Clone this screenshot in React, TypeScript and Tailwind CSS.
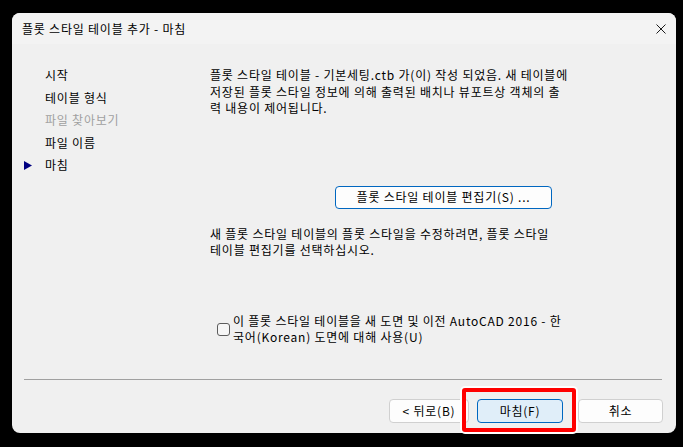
import React from "react";

const navItems: { label: string; disabled?: boolean; current?: boolean }[] = [
  { label: "시작" },
  { label: "테이블 형식" },
  { label: "파일 찾아보기", disabled: true },
  { label: "파일 이름" },
  { label: "마침", current: true },
];

export default function App() {
  return (
    <div className="relative w-[683px] h-[447px] bg-black pt-[13px] pl-[12px] font-['Noto_Sans_CJK_KR',sans-serif] text-[12px] tracking-[0.78px] text-black">
      <div className="w-[664px] h-[420px] rounded-[8px] overflow-hidden flex flex-col bg-[#f0f0f0]">
        {/* Title bar */}
        <div className="h-[31px] bg-[#f3f3f3] flex items-center justify-between pl-[10px] pr-[10px]">
          <span className="leading-none">플롯 스타일 테이블 추가 - 마침</span>
          <svg width="10" height="10" viewBox="0 0 10 10">
            <path d="M0.5 0.5 L9.5 9.5 M9.5 0.5 L0.5 9.5" stroke="#1a1a1a" strokeWidth="1" fill="none" />
          </svg>
        </div>

        {/* Body */}
        <div className="flex-1 flex flex-col">
          <div className="flex-1 flex">
            {/* Nav */}
            <div className="w-[198px] pt-[20px] flex flex-col">
              {navItems.map((it) => (
                <div key={it.label} className="h-[22.5px] flex items-center">
                  <div className="w-[33px] pl-[12px] flex items-center">
                    {it.current && (
                      <svg width="8" height="9" viewBox="0 0 8 9">
                        <path d="M0 0 L8 4.5 L0 9 Z" fill="#000080" />
                      </svg>
                    )}
                  </div>
                  <span className={it.disabled ? "text-[#a0a0a0]" : "text-black"}>{it.label}</span>
                </div>
              ))}
            </div>

            {/* Main */}
            <div className="flex-1 pt-[23px] flex flex-col">
              <p className="leading-[16.5px]">
                플롯 스타일 테이블 - 기본세팅.ctb 가(이) 작성 되었음. 새 테이블에
                <br />
                저장된 플롯 스타일 정보에 의해 출력된 배치나 뷰포트상 객체의 출
                <br />
                력 내용이 제어됩니다.
              </p>
              <div className="mt-[69px] ml-[125px]">
                <button className="w-[217px] h-[23px] rounded-[4px] border border-[#0067c0] bg-[#fdfdfd] flex items-center justify-center leading-none">
                  플롯 스타일 테이블 편집기(S) ...
                </button>
              </div>
              <p className="mt-[17px] leading-[16.5px]">
                새 플롯 스타일 테이블의 플롯 스타일을 수정하려면, 플롯 스타일
                <br />
                테이블 편집기를 선택하십시오.
              </p>
              <div className="mt-[54px] ml-[7px] flex items-center">
                <div className="w-[13px] h-[13px] rounded-[3px] border border-[#5c5c5c] bg-[#f6f6f6] shrink-0" />
                <p className="ml-[3px] leading-[16.5px]">
                  이 플롯 스타일 테이블을 새 도면 및 이전 AutoCAD 2016 - 한
                  <br />
                  국어(Korean) 도면에 대해 사용(U)
                </p>
              </div>
            </div>
          </div>

          {/* Separator */}
          <div className="h-px bg-[#a0a0a0] ml-[12px] mr-[14px]" />

          {/* Footer */}
          <div className="h-[53px] pt-[19px] pr-[13px] flex justify-end items-start">
            <button className="w-[80px] h-[24px] rounded-[4px] border border-[#d0d0d0] bg-[#fdfdfd] flex items-center justify-center leading-none">
              &lt; 뒤로(B)
            </button>
            <button className="ml-[8px] w-[86px] h-[24px] rounded-[4px] border border-[#0067c0] bg-[#e0eef9] flex items-center justify-center leading-none">
              마침(F)
            </button>
            <button className="ml-[15px] w-[85px] h-[24px] rounded-[4px] border border-[#d0d0d0] bg-[#fdfdfd] flex items-center justify-center leading-none">
              취소
            </button>
          </div>
        </div>
      </div>

      {/* Red highlight annotation */}
      <div className="absolute left-[462px] top-[388px] w-[114px] h-[44px] border-[4px] border-[#ff0000] rounded-[3px] shadow-[0_0_0_2px_#ffffff] pointer-events-none" />
    </div>
  );
}
